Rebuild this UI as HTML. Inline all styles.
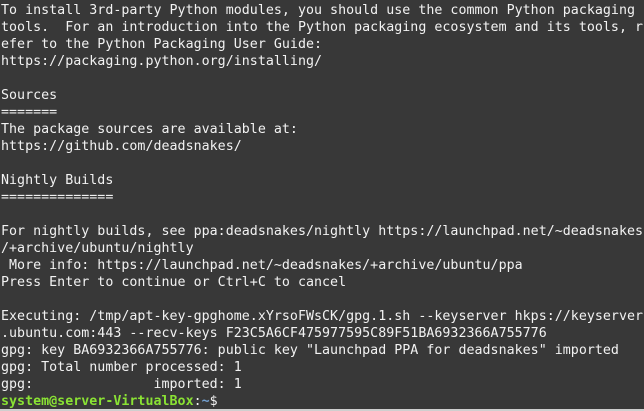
<!DOCTYPE html>
<html><head><meta charset="utf-8"><style>
html,body{margin:0;padding:0;}
body{width:644px;height:411px;background:#383838;overflow:hidden;position:relative;}
pre{margin:0;position:absolute;left:1px;top:2px;font-family:"DejaVu Sans Mono","Liberation Mono",monospace;font-size:13.3px;line-height:17px;color:#f2f2f2;letter-spacing:0.02px;white-space:pre;}
.g{color:#8ae234;font-weight:bold}
.b{color:#729fcf;font-weight:bold}
.bar{position:absolute;left:0;bottom:0;width:644px;height:2px;background:#cfcfcf;}
</style></head><body>
<pre>To install 3rd-party Python modules, you should use the common Python packaging
tools.  For an introduction into the Python packaging ecosystem and its tools, r
efer to the Python Packaging User Guide:
https://packaging.python.org/installing/

Sources
=======
The package sources are available at:
https://github.com/deadsnakes/

Nightly Builds
==============

For nightly builds, see ppa:deadsnakes/nightly https://launchpad.net/~deadsnakes
/+archive/ubuntu/nightly
 More info: https://launchpad.net/~deadsnakes/+archive/ubuntu/ppa
Press Enter to continue or Ctrl+C to cancel

Executing: /tmp/apt-key-gpghome.xYrsoFWsCK/gpg.1.sh --keyserver hkps://keyserver
.ubuntu.com:443 --recv-keys F23C5A6CF475977595C89F51BA6932366A755776
gpg: key BA6932366A755776: public key "Launchpad PPA for deadsnakes" imported
gpg: Total number processed: 1
gpg:               imported: 1
<span class="g">system@server-VirtualBox</span>:<span class="b">~</span>$ </pre>
<div class="bar"></div>
</body></html>
